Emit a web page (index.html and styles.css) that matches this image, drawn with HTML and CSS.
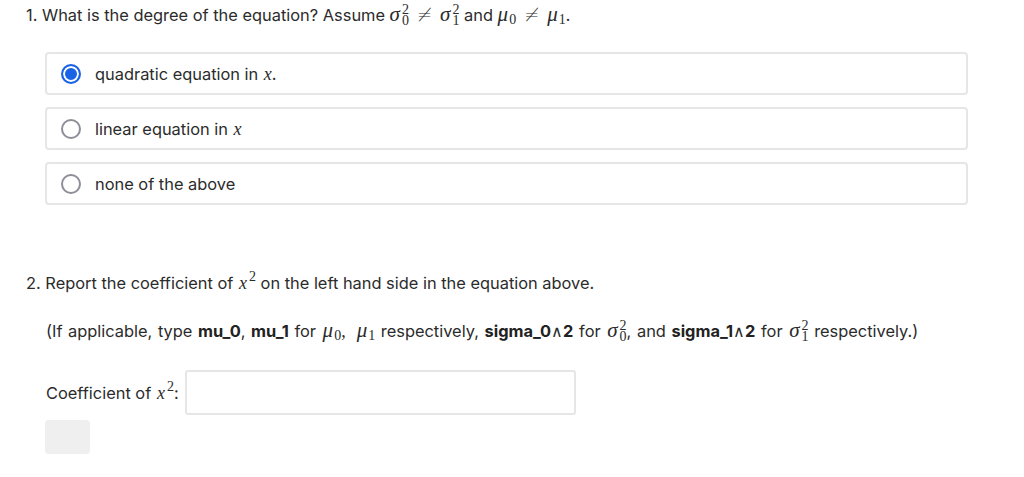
FILE: index.html
```html
<!DOCTYPE html>
<html>
<head>
<meta charset="utf-8">
<link rel="stylesheet" href="styles.css">
</head>
<body>
<div class="page">
  <div class="q q1">1. What is the degree of the equation? Assume <span class="m"><i>σ</i><span class="ss"><span>2</span><span>0</span></span><span class="op">≠</span><i>σ</i><span class="ss"><span>2</span><span>1</span></span></span> and <span class="m"><i>μ</i><sub class="s">0</sub><span class="op">≠</span><i>μ</i><sub class="s">1</sub>.</span></div>
  <div class="options">
    <label class="opt"><span class="radio on"></span><span>quadratic equation in <i class="m x">x</i>.</span></label>
    <label class="opt"><span class="radio"></span><span>linear equation in <i class="m x">x</i></span></label>
    <label class="opt"><span class="radio"></span><span>none of the above</span></label>
  </div>
  <div class="q q2">2. Report the coefficient of <span class="m"><i class="x">x</i><sup class="p">2</sup></span> on the left hand side in the equation above.</div>
  <div class="note">(If applicable, type <b>mu_0</b>, <b>mu_1</b> for <span class="m"><i>μ</i><sub class="s">0</sub>,&nbsp; <i>μ</i><sub class="s">1</sub></span> respectively, <b>sigma_0</b>∧<b>2</b> for <span class="m"><i>σ</i><span class="ss"><span>2</span><span>0</span></span></span>, and <b>sigma_1</b>∧<b>2</b> for <span class="m"><i>σ</i><span class="ss"><span>2</span><span>1</span></span></span> respectively.)</div>
  <div class="answer">
    <span class="lbl">Coefficient of <span class="m"><i class="x">x</i><sup class="p">2</sup></span>:</span>
    <span class="input"></span>
  </div>
  <div class="btn"></div>
</div>
</body>
</html>
```
FILE: styles.css
```css
html, body { margin: 0; padding: 0; background: #fff; }
body { font-family: Inter, "Noto Sans", sans-serif; font-size: 16.4px; color: #2b2b2b; }
.page { padding: 4px 0 0 26px; width: 942px; }
.q, .note { line-height: 22px; }
.m { font-family: "Liberation Serif", serif; font-size: 18px; white-space: nowrap; line-height: 0; }
.m i, i.m { font-style: italic; font-family: "Liberation Serif", serif; font-size: 21px; }
.m i.x, i.m.x { font-size: 18px; margin-left: 1px; }
.op { font-family: "DejaVu Sans", sans-serif; font-size: 18px; font-weight: 300; margin: 0 8px; }
.ss { display: inline-flex; flex-direction: column; vertical-align: 7px; font-family: "Liberation Serif", serif; font-size: 14px; line-height: 11px; margin-left: 2px; }
sub.s { font-family: "Liberation Serif", serif; font-size: 14px; vertical-align: -3px; line-height: 0; margin-left: 1px; }
sup.p { font-family: "Liberation Serif", serif; font-size: 14px; vertical-align: 8px; line-height: 0; margin-left: 2px; }
.note .op, .note .m { margin-left: 1px; }
.options { display: flex; flex-direction: column; gap: 12px; margin: 26px 0 0 19px; }
.opt { display: flex; align-items: center; gap: 14px; height: 39px; border: 2px solid #e6e6e6; border-radius: 4px; padding-left: 14px; }
.radio { width: 16px; height: 16px; border: 2px solid #8e8e98; border-radius: 50%; box-sizing: content-box; flex: none; }
.radio.on { border-color: #1a62e6; background: #1a62e6; box-shadow: inset 0 0 0 2px #fff; }
.q2 { margin-top: 67px; }
.note { margin: 26px 0 0 20px; word-spacing: 1px; }
.note b { font-weight: 700; color: #222; }
.answer { display: flex; align-items: center; margin: 28px 0 0 20px; }
.lbl { margin-right: 6px; }
.input { width: 387px; height: 41px; border: 2px solid #e6e6e6; border-radius: 3px; }
.btn { width: 45px; height: 34px; background: #efefef; border-radius: 4px; margin: 5px 0 0 19px; }
```
